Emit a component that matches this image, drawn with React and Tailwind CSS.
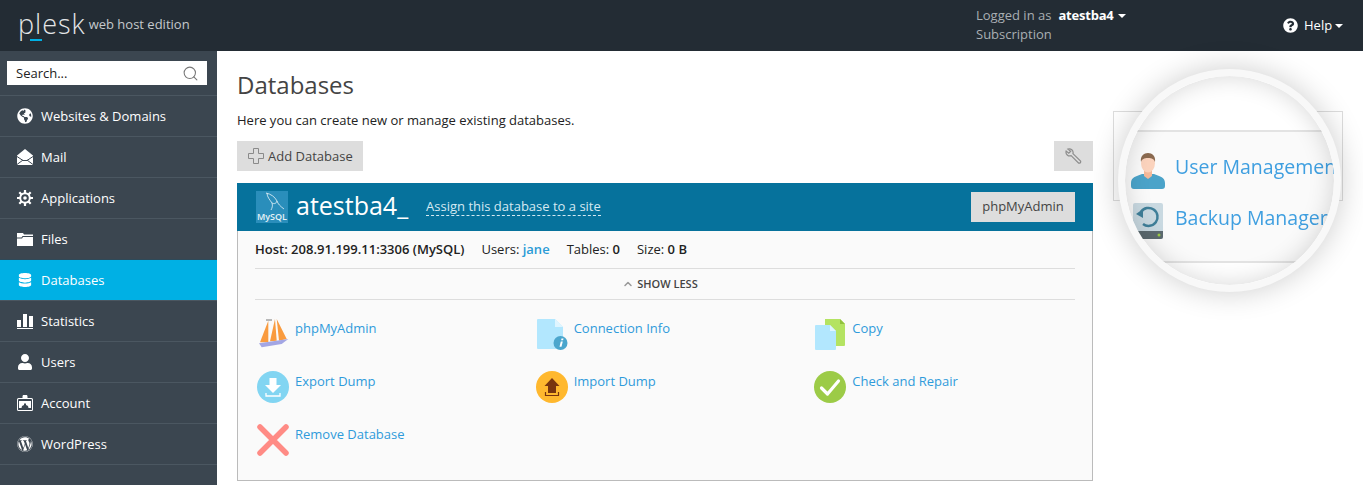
import React from "react";
import {
  FaGlobeAmericas,
  FaDatabase,
  FaUser,
  FaWordpress,
  FaQuestionCircle,
} from "react-icons/fa";
import { Search, ChevronUp } from "lucide-react";

function MailIcon() {
  return (
    <svg viewBox="0 0 16 16" className="h-4 w-4">
      <path d="M0 6.500 8 0l8 6.500V16H0z" fill="#fff" />
      <path d="M0 7.500 6 11.500h4l6-4M0 15.500l6-4.500M16 15.500 10 11" fill="none" stroke="#3b4650" strokeWidth="1" />
    </svg>
  );
}

function GearIcon() {
  return (
    <svg viewBox="0 0 16 16" className="h-4 w-4" fill="none" stroke="#fff">
      <circle cx="8" cy="8" r="4.800" strokeWidth="2" />
      <circle cx="8" cy="8" r="1.800" fill="#fff" stroke="none" />
      <path d="M8 0v3M8 13v3M0 8h3M13 8h3M2.300 2.300l2.200 2.200M11.500 11.500l2.200 2.200M13.700 2.300l-2.200 2.200M4.500 11.500l-2.200 2.200" strokeWidth="2.200" />
    </svg>
  );
}

function FolderIcon() {
  return (
    <svg viewBox="0 0 16 14" className="h-[14px] w-4" fill="#fff">
      <path d="M0 1h6l1 1.500h9V4H5.500L4.500 5.500H0z" />
      <path d="M0 6.500h5l1-1.500h10v9H0z" />
    </svg>
  );
}

function StatsIcon() {
  return (
    <svg viewBox="0 0 16 16" className="h-4 w-4" fill="#fff">
      <rect x="0" y="7" width="4" height="7" />
      <rect x="6" y="1" width="4" height="13" />
      <rect x="12" y="3" width="4" height="11" />
      <rect x="0" y="15" width="16" height="1" />
    </svg>
  );
}

function AccountIcon() {
  return (
    <svg viewBox="0 0 16 16" className="h-4 w-4" fill="#fff">
      <path d="M1.500 3h4V1.500a2.500 2 0 0 1 5 0V3h4A1.500 1.500 0 0 1 16 4.500v10a1.500 1.500 0 0 1-1.500 1.500h-13A1.500 1.500 0 0 1 0 14.500v-10A1.500 1.500 0 0 1 1.500 3zM1 5v9.500a.5.5 0 0 0 .5.5h13a.5.5 0 0 0 .5-.5V5a1 1 0 0 0-1-1H2a1 1 0 0 0-1 1z" />
      <path d="M2 6h12v7h-2.500l-.5-2-2-1V8.500h-2V10l-2 1-.5 2H2z" />
    </svg>
  );
}

function PlusOutline() {
  return (
    <svg viewBox="0 0 16 16" className="h-4 w-4" fill="none" stroke="#8a8a8a">
      <path d="M5.500.5h5v5h5v5h-5v5h-5v-5h-5v-5h5z" />
    </svg>
  );
}

function WrenchIcon() {
  return (
    <svg viewBox="0 0 18 18" className="h-[17px] w-[17px]" fill="none" stroke="#8d8d8d" strokeWidth="1.300">
      <path d="M3 1.200 6 3.500 4 5.500 1.200 3.300a4 4 0 0 0 5.300 4.800l8 7.900a1.600 1.600 0 0 0 2-2.100L8.400 6A4 4 0 0 0 3 1.200z" />
    </svg>
  );
}

function MysqlLogo() {
  return (
    <div className="flex h-8 w-8 flex-col items-center justify-end bg-[#2a8ebb] pb-px">
      <svg viewBox="0 0 32 20" className="h-5 w-8" fill="none" stroke="#d5e9f2" strokeWidth="0.900">
        <path d="M10 1c5 1 9 4 11 8 1 3 3 5 7 8M11 1c0 4 3 7 5 10 1 3 0 5-1 7M21 9c-1 3-3 3-5 2" />
      </svg>
      <span className="text-[9px] leading-[10px] font-semibold text-[#e6f2f7]">MySQL</span>
    </div>
  );
}

function SailIcon() {
  return (
    <svg viewBox="0 0 32 32" className="h-8 w-8">
      <path d="M11.300 2.700 3 24.300h8.300z" fill="#f99b3f" />
      <path d="M18 1 13 23.300l6.700-.6z" fill="#f99b3f" />
      <path d="M19.700 1 22 22.700l7.700-1.700z" fill="#f99b3f" />
      <path d="M2 25.300 31.300 21l-6.600 5-20 3.300z" fill="#a3a6e4" />
      <path d="M9 2h6" stroke="#555" strokeWidth="0.800" />
    </svg>
  );
}

function FileInfoIcon() {
  return (
    <svg viewBox="0 0 32 32" className="h-8 w-8">
      <path d="M1 2a1 1 0 0 1 1-1h17l8 8v21a1 1 0 0 1-1 1H2a1 1 0 0 1-1-1z" fill="#b2e7fe" />
      <path d="M19 1l8 8h-8z" fill="#dff5ff" />
      <circle cx="24.500" cy="25" r="7" fill="#4ba6cd" />
      <path d="M25.500 20.500h2l-.4 1.800h-2zM24.800 23.500h2l-1.300 5.300h-2z" fill="#fff" />
    </svg>
  );
}

function CopyIcon() {
  return (
    <svg viewBox="0 0 32 32" className="h-8 w-8">
      <path d="M11 1h15l5 5v21a1 1 0 0 1-1 1H11z" fill="#b4e362" />
      <path d="M26 1l5 5h-5z" fill="#91c23e" />
      <path d="M1 8a1 1 0 0 1 1-1h14l6 6v18a1 1 0 0 1-1 1H2a1 1 0 0 1-1-1z" fill="#b2e7fe" />
      <path d="M16 7l6 6h-6z" fill="#dff5ff" />
    </svg>
  );
}

function ExportIcon() {
  return (
    <svg viewBox="0 0 32 32" className="h-8 w-8">
      <circle cx="16" cy="16" r="16" fill="#82d5f2" />
      <path d="M12.500 7h7v7H24l-8 8-8-8h4.500z" fill="#fff" />
      <path d="M9 22v3h14v-3" fill="none" stroke="#fff" strokeWidth="1.300" />
    </svg>
  );
}

function ImportIcon() {
  return (
    <svg viewBox="0 0 32 32" className="h-8 w-8">
      <circle cx="16" cy="16" r="16" fill="#ffb82e" />
      <path d="M16 7l7.500 8H20v7h-8v-7H8.500z" fill="#78340f" />
      <path d="M9.500 21v3.500h13V21" fill="none" stroke="#78340f" strokeWidth="1.200" />
    </svg>
  );
}

function CheckIcon() {
  return (
    <svg viewBox="0 0 32 32" className="h-8 w-8">
      <circle cx="16" cy="16" r="16" fill="#9ccb47" />
      <path d="M7.500 17l6 6 11-13" fill="none" stroke="#fff" strokeWidth="3.200" strokeLinecap="round" strokeLinejoin="round" />
    </svg>
  );
}

function RemoveIcon() {
  return (
    <svg viewBox="0 0 32 32" className="h-8 w-8">
      <path d="M3 3l26 26M29 3 3 29" fill="none" stroke="#ff8b85" strokeWidth="5.500" strokeLinecap="round" />
    </svg>
  );
}

function UserBigIcon() {
  return (
    <svg viewBox="0 0 34 36" className="h-9 w-[34px] shrink-0">
      <path d="M0 30c0-6 6-7 11-9h12c5 2 11 3 11 9v3a3 3 0 0 1-3 3H3a3 3 0 0 1-3-3z" fill="#4ba3c9" />
      <path d="M13 17h8v6l-4 3-4-3z" fill="#f3b99a" />
      <ellipse cx="17" cy="10" rx="7" ry="9.500" fill="#fbd3bd" />
      <path d="M10 9c-1-6 3-9 7-9s8 3 7 9c-1-3-3-4-7-4s-6 1-7 4z" fill="#8b6a50" />
    </svg>
  );
}

function BackupBigIcon() {
  return (
    <svg viewBox="0 0 30 36" className="h-9 w-[30px] shrink-0">
      <rect width="30" height="36" rx="2" fill="#c9d9e1" />
      <path d="M0 28h30v6a2 2 0 0 1-2 2H2a2 2 0 0 1-2-2z" fill="#5c6a70" />
      <circle cx="26" cy="32" r="1.500" fill="#9ccb47" />
      <path d="M8 9a9 9 0 1 1 2 12" fill="none" stroke="#3f7f99" strokeWidth="2.500" />
      <path d="M3 11l7-5v9z" fill="#3f7f99" />
    </svg>
  );
}

const navItems = [
  { label: "Websites & Domains", icon: <FaGlobeAmericas size={16} color="#fff" /> },
  { label: "Mail", icon: <MailIcon /> },
  { label: "Applications", icon: <GearIcon /> },
  { label: "Files", icon: <FolderIcon /> },
  { label: "Databases", icon: <FaDatabase size={14} color="#fff" />, active: true },
  { label: "Statistics", icon: <StatsIcon /> },
  { label: "Users", icon: <FaUser size={16} color="#fff" /> },
  { label: "Account", icon: <AccountIcon /> },
  { label: "WordPress", icon: <FaWordpress size={16} color="#fff" /> },
];

const tools = [
  { label: "phpMyAdmin", icon: <SailIcon /> },
  { label: "Connection Info", icon: <FileInfoIcon /> },
  { label: "Copy", icon: <CopyIcon /> },
  { label: "Export Dump", icon: <ExportIcon /> },
  { label: "Import Dump", icon: <ImportIcon /> },
  { label: "Check and Repair", icon: <CheckIcon /> },
  { label: "Remove Database", icon: <RemoveIcon /> },
];

function Header() {
  return (
    <header className="flex h-[51px] items-stretch bg-[#232c34]">
      <div className="flex w-[976px] items-center pl-[18px]">
        <span className="relative -mt-[4px] text-[27px] leading-none font-light tracking-[1px] text-[#e4e6e8]">
          plesk
          <span className="absolute left-[12px] top-[29px] h-[2px] w-3 bg-[#00b0e4]" />
        </span>
        <span className="ml-[3px] -mt-[2px] text-[13px] text-[#c5c9cc]">web host edition</span>
      </div>
      <div className="w-[307px] pt-[6px] text-[13px] leading-[19px] text-[#a9afb3]">
        <div className="flex items-center">
          Logged in as
          <span className="ml-[7px] font-bold tracking-[-0.2px] text-white">atestba4</span>
          <span className="ml-[4px] mt-[1px] border-x-[4px] border-t-[4px] border-x-transparent border-t-white" />
        </div>
        <div>Subscription</div>
      </div>
      <div className="flex items-center text-[13px] text-white">
        <FaQuestionCircle size={15} color="#fff" />
        <span className="ml-[6px]">Help</span>
        <span className="ml-[3px] mt-[1px] border-x-[4px] border-t-[4px] border-x-transparent border-t-white" />
      </div>
    </header>
  );
}

function Sidebar() {
  return (
    <aside className="w-[217px] shrink-0 bg-[#3b4650]">
      <div className="h-11 px-[7px] pt-[10px]">
        <div className="flex h-6 w-[200px] items-center justify-between bg-white pl-[9px] pr-2 text-[13px] text-[#222]">
          <span className="pt-px">Search...</span>
          <Search size={17} color="#777" strokeWidth={1.500} />
        </div>
      </div>
      <nav className="border-b border-[#4b5761]">
        {navItems.map((item) => (
          <div
            key={item.label}
            className={`flex h-[41px] items-center border-t text-[13px] text-white ${
              item.active ? "border-[#2d4a5a] bg-[#00b0e4]" : "border-[#4b5761]"
            }`}
          >
            <span className="flex w-[41px] justify-center pl-[17px] pr-2">{item.icon}</span>
            <span className="pt-[2px]">{item.label}</span>
          </div>
        ))}
      </nav>
    </aside>
  );
}

function DatabasePanel() {
  return (
    <section className="mt-3 w-[856px]">
      <div className="flex h-12 items-center bg-[#06729c] pl-[19px] pr-[18px]">
        <MysqlLogo />
        <span className="ml-2 -mt-[2px] text-[25px] text-white">atestba4_</span>
        <span className="ml-[18px] border-b border-dashed border-[#d5e9f2] text-[13px] leading-[17px] text-[#d5e9f2]">
          Assign this database to a site
        </span>
        <span className="ml-auto flex h-[30px] w-[104px] items-center justify-center bg-[#dddddd] text-[13px] text-[#444]">
          phpMyAdmin
        </span>
      </div>
      <div className="h-[250px] border-x border-b border-[#bbbbbb] bg-[#fafafa]">
        <div className="mx-[17px] flex h-[38px] items-center gap-[17px] border-b border-[#dddddd] text-[13px] text-[#222]">
          <span className="font-semibold">Host: 208.91.199.11:3306 (MySQL)</span>
          <span>
            Users: <span className="font-semibold text-[#2a9bd6]">jane</span>
          </span>
          <span>
            Tables: <span className="font-semibold">0</span>
          </span>
          <span>
            Size: <span className="font-semibold">0 B</span>
          </span>
        </div>
        <div className="mx-[17px] flex h-[31px] items-center justify-center gap-[3px] border-b border-[#dddddd] pr-[10px] text-[11px] font-semibold text-[#444]">
          <ChevronUp size={12} color="#999" strokeWidth={3} />
          SHOW LESS
        </div>
        <div className="ml-[19px] mt-[18px] grid w-[836px] grid-cols-3 gap-y-[21px]">
          {tools.map((tool) => (
            <div key={tool.label} className="flex h-8 gap-[6px] text-[13px] leading-[20px] text-[#2f9bdb]">
              {tool.icon}
              {tool.label}
            </div>
          ))}
        </div>
      </div>
    </section>
  );
}

function Magnifier() {
  return (
    <>
      <div className="absolute left-[1113px] top-[111px] h-[90px] w-[230px] border border-[#dddddd]" />
      <div className="absolute left-[1118px] top-[69px] h-[223px] w-[223px] overflow-hidden rounded-full border-[7px] border-[#f8f8f8] bg-white shadow-[0_0_30px_rgba(0,0,0,0.2)]">
        <div className="mt-[54px] h-[133px] border-y-2 border-[#e3e3e3] bg-[#fafafa] pl-[6px] pt-[21px] blur-[0.4px]">
          <div className="flex h-9 items-center gap-[10px] whitespace-nowrap text-[19.5px] text-[#3f9fe0]">
            <UserBigIcon />
            <span className="pb-2">User Management</span>
          </div>
          <div className="ml-[2px] mt-[14px] flex h-9 items-center gap-3 whitespace-nowrap text-[19.5px] text-[#3f9fe0]">
            <BackupBigIcon />
            <span className="pb-[6px]">Backup Manager</span>
          </div>
        </div>
        <div className="pointer-events-none absolute inset-0 rounded-full shadow-[inset_0_0_24px_rgba(0,0,0,0.16)]" />
      </div>
    </>
  );
}

export default function App() {
  return (
    <div className="relative h-[485px] w-[1363px] overflow-hidden bg-white font-['Open_Sans',sans-serif]">
      <Header />
      <div className="flex h-[434px]">
        <Sidebar />
        <main className="pl-5 pt-[17px]">
          <h1 className="text-2xl leading-[33px] text-[#444]">Databases</h1>
          <p className="mt-[10px] text-[13px] leading-[18px] text-[#222]">
            Here you can create new or manage existing databases.
          </p>
          <div className="mt-[12px] flex w-[856px] justify-between">
            <button className="flex h-[30px] w-[126px] items-center gap-1 bg-[#dddddd] pl-[11px] text-[13px] text-[#444]">
              <PlusOutline />
              <span className="pt-[2px]">Add Database</span>
            </button>
            <button className="flex h-[30px] w-[39px] items-center justify-center bg-[#dddddd]">
              <WrenchIcon />
            </button>
          </div>
          <DatabasePanel />
        </main>
      </div>
      <Magnifier />
    </div>
  );
}
